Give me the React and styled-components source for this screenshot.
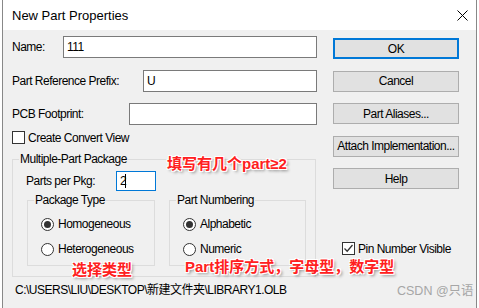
import React from "react";
import styled, { createGlobalStyle } from "styled-components";

const UI_FONT = `"Liberation Sans", "Noto Sans CJK SC", sans-serif`;

const Global = createGlobalStyle`
  html, body { margin: 0; padding: 0; background: #fff; }
  body { font-family: ${UI_FONT}; font-size: 12px; letter-spacing: -0.5px; color: #000; }
  * { box-sizing: border-box; }
`;

const Window = styled.div`
  position: relative;
  margin-left: 2px;
  width: 475px;
  height: 308px;
  border-left: 1px solid #888;
  border-right: 1px solid #888;
  background: #f0f0f0;
  overflow: hidden;
`;

const TitleBar = styled.div`
  height: 30px;
  background: #fff;
  display: flex;
  align-items: center;
  justify-content: space-between;
  padding: 0 8px 0 9px;
`;

const Title = styled.div`
  font-family: "Liberation Sans", sans-serif;
  font-size: 13px;
  letter-spacing: 0;
  color: #000;
`;

const Body = styled.div`
  display: grid;
  grid-template-columns: 305px 126px;
  column-gap: 16px;
  padding: 6px 0 0 9px;
`;

const LeftCol = styled.div`
  display: flex;
  flex-direction: column;
`;

const Fields = styled.div`
  display: grid;
  grid-auto-rows: 22px;
  row-gap: 11.5px;
`;

const FieldRow = styled.div`
  display: flex;
  align-items: center;
`;

const Label = styled.span`
  flex: none;
  width: ${(p) => p.$w}px;
  white-space: nowrap;
`;

const TextInput = styled.div`
  flex: 1;
  height: 22px;
  background: #fff;
  border: 1px solid ${(p) => (p.$focus ? "#0078d7" : "#7a7a7a")};
  padding: 0 3px;
  display: flex;
  align-items: center;
  white-space: nowrap;
`;

const Caret = styled.span`
  display: inline-block;
  width: 1px;
  height: 14px;
  background: #000;
  margin-left: -1px;
`;

const CheckRow = styled.div`
  display: flex;
  align-items: center;
  gap: 3px;
  height: 13px;
  margin-top: ${(p) => p.$mt || 0}px;
  margin-left: ${(p) => p.$ml || 0}px;
  white-space: nowrap;
`;

const Box = styled.span`
  flex: none;
  width: 13px;
  height: 13px;
  background: #fff;
  border: 1px solid #333;
  display: flex;
  align-items: center;
  justify-content: center;
`;

const Group = styled.fieldset`
  margin: ${(p) => p.$mt || 0}px 0 0 0;
  padding: 0 6px;
  border: 1px solid #dcdcdc;
  min-width: 0;
  width: ${(p) => p.$w}px;
`;

const Legend = styled.legend`
  padding: 0 1px;
  line-height: 16px;
  white-space: nowrap;
`;

const PartsRow = styled.div`
  display: flex;
  align-items: center;
  height: 20px;
  margin-top: 4px;
  padding-left: 7px;
`;

const SmallInput = styled(TextInput)`
  flex: none;
  width: 40px;
  height: 20px;
`;

const InnerRow = styled.div`
  display: flex;
  gap: 14px;
  margin-top: 1px;
  padding: 0 0 10px 8px;
`;

const RadioList = styled.div`
  display: flex;
  flex-direction: column;
  gap: 9px;
  padding: 8px 0 8px 7px;
`;

const RadioRow = styled.div`
  display: flex;
  align-items: center;
  gap: 4px;
  height: 16px;
  white-space: nowrap;
`;

const Circle = styled.span`
  flex: none;
  width: 13px;
  height: 13px;
  border-radius: 50%;
  border: 1px solid #333;
  background: #fff;
  display: flex;
  align-items: center;
  justify-content: center;
  &::after {
    content: "";
    width: 7px;
    height: 7px;
    border-radius: 50%;
    background: ${(p) => (p.$on ? "#333" : "transparent")};
  }
`;

const PathText = styled.div`
  margin-top: 5px;
  padding-left: 3px;
  line-height: 16px;
  white-space: nowrap;
`;

const RightCol = styled.div`
  display: flex;
  flex-direction: column;
  padding-top: 2px;
`;

const Buttons = styled.div`
  display: flex;
  flex-direction: column;
  gap: 11.5px;
`;

const Button = styled.div`
  height: 21px;
  background: #e1e1e1;
  border: ${(p) => (p.$default ? "2px solid #0078d7" : "1px solid #adadad")};
  display: flex;
  align-items: center;
  justify-content: center;
  white-space: nowrap;
`;

const Note = styled.div`
  position: absolute;
  left: ${(p) => p.$x}px;
  top: ${(p) => p.$y}px;
  font-family: "Liberation Sans", "Noto Sans CJK SC", sans-serif;
  font-weight: 700;
  font-size: 15px;
  letter-spacing: 0;
  line-height: 18px;
  color: #ff2020;
  white-space: nowrap;
  text-shadow: -1px -1px 0 #fff, 1px -1px 0 #fff, -1px 1px 0 #fff, 1px 1px 0 #fff,
    0 0 2px #fff, 2px 2px 3px rgba(0, 0, 0, 0.45);
`;

const Watermark = styled.div`
  position: absolute;
  left: 394px;
  top: 283px;
  font-family: "Liberation Sans", "Noto Sans CJK SC", sans-serif;
  font-size: 12.5px;
  letter-spacing: 0;
  line-height: 16px;
  color: #a6a6a6;
  white-space: nowrap;
`;

const CloseIcon = () => (
  <svg width="11" height="11" viewBox="0 0 11 11">
    <path d="M0.5 0.5 L10.5 10.5 M10.5 0.5 L0.5 10.5" stroke="#000" strokeWidth="1" fill="none" />
  </svg>
);

const CheckMark = () => (
  <svg width="11" height="11" viewBox="0 0 11 11">
    <path d="M1.5 5.5 L4.2 8.2 L9.5 2" stroke="#333" strokeWidth="1.3" fill="none" />
  </svg>
);

const Radio = ({ on, children }) => (
  <RadioRow>
    <Circle $on={on} />
    <span>{children}</span>
  </RadioRow>
);

export default function App() {
  return (
    <>
      <Global />
      <Window>
        <TitleBar>
          <Title>New Part Properties</Title>
          <CloseIcon />
        </TitleBar>
        <Body>
          <LeftCol>
            <Fields>
              <FieldRow>
                <Label $w={51}>Name:</Label>
                <TextInput>111</TextInput>
              </FieldRow>
              <FieldRow>
                <Label $w={131}>Part Reference Prefix:</Label>
                <TextInput>U</TextInput>
              </FieldRow>
              <FieldRow>
                <Label $w={117}>PCB Footprint:</Label>
                <TextInput />
              </FieldRow>
            </Fields>
            <CheckRow $mt={6}>
              <Box />
              <span>Create Convert View</span>
            </CheckRow>
            <Group $w={304} $mt={7}>
              <Legend>Multiple-Part Package</Legend>
              <PartsRow>
                <Label $w={90}>Parts per Pkg:</Label>
                <SmallInput $focus>
                  2<Caret />
                </SmallInput>
              </PartsRow>
              <InnerRow>
                <Group $w={128}>
                  <Legend>Package Type</Legend>
                  <RadioList>
                    <Radio on>Homogeneous</Radio>
                    <Radio>Heterogeneous</Radio>
                  </RadioList>
                </Group>
                <Group $w={137}>
                  <Legend>Part Numbering</Legend>
                  <RadioList>
                    <Radio on>Alphabetic</Radio>
                    <Radio>Numeric</Radio>
                  </RadioList>
                </Group>
              </InnerRow>
            </Group>
            <PathText>{"C:\\USERS\\LIU\\DESKTOP\\新建文件夹\\LIBRARY1.OLB"}</PathText>
          </LeftCol>
          <RightCol>
            <Buttons>
              <Button $default>OK</Button>
              <Button>Cancel</Button>
              <Button>Part Aliases...</Button>
              <Button>Attach Implementation...</Button>
              <Button>Help</Button>
            </Buttons>
            <CheckRow $mt={53} $ml={9}>
              <Box>
                <CheckMark />
              </Box>
              <span>Pin Number Visible</span>
            </CheckRow>
          </RightCol>
        </Body>
        <Note $x={164} $y={155}>填写有几个part≥2</Note>
        <Note $x={69} $y={261}>选择类型</Note>
        <Note $x={182} $y={258}>Part排序方式，字母型，数字型</Note>
        <Watermark>CSDN @只语</Watermark>
      </Window>
    </>
  );
}
